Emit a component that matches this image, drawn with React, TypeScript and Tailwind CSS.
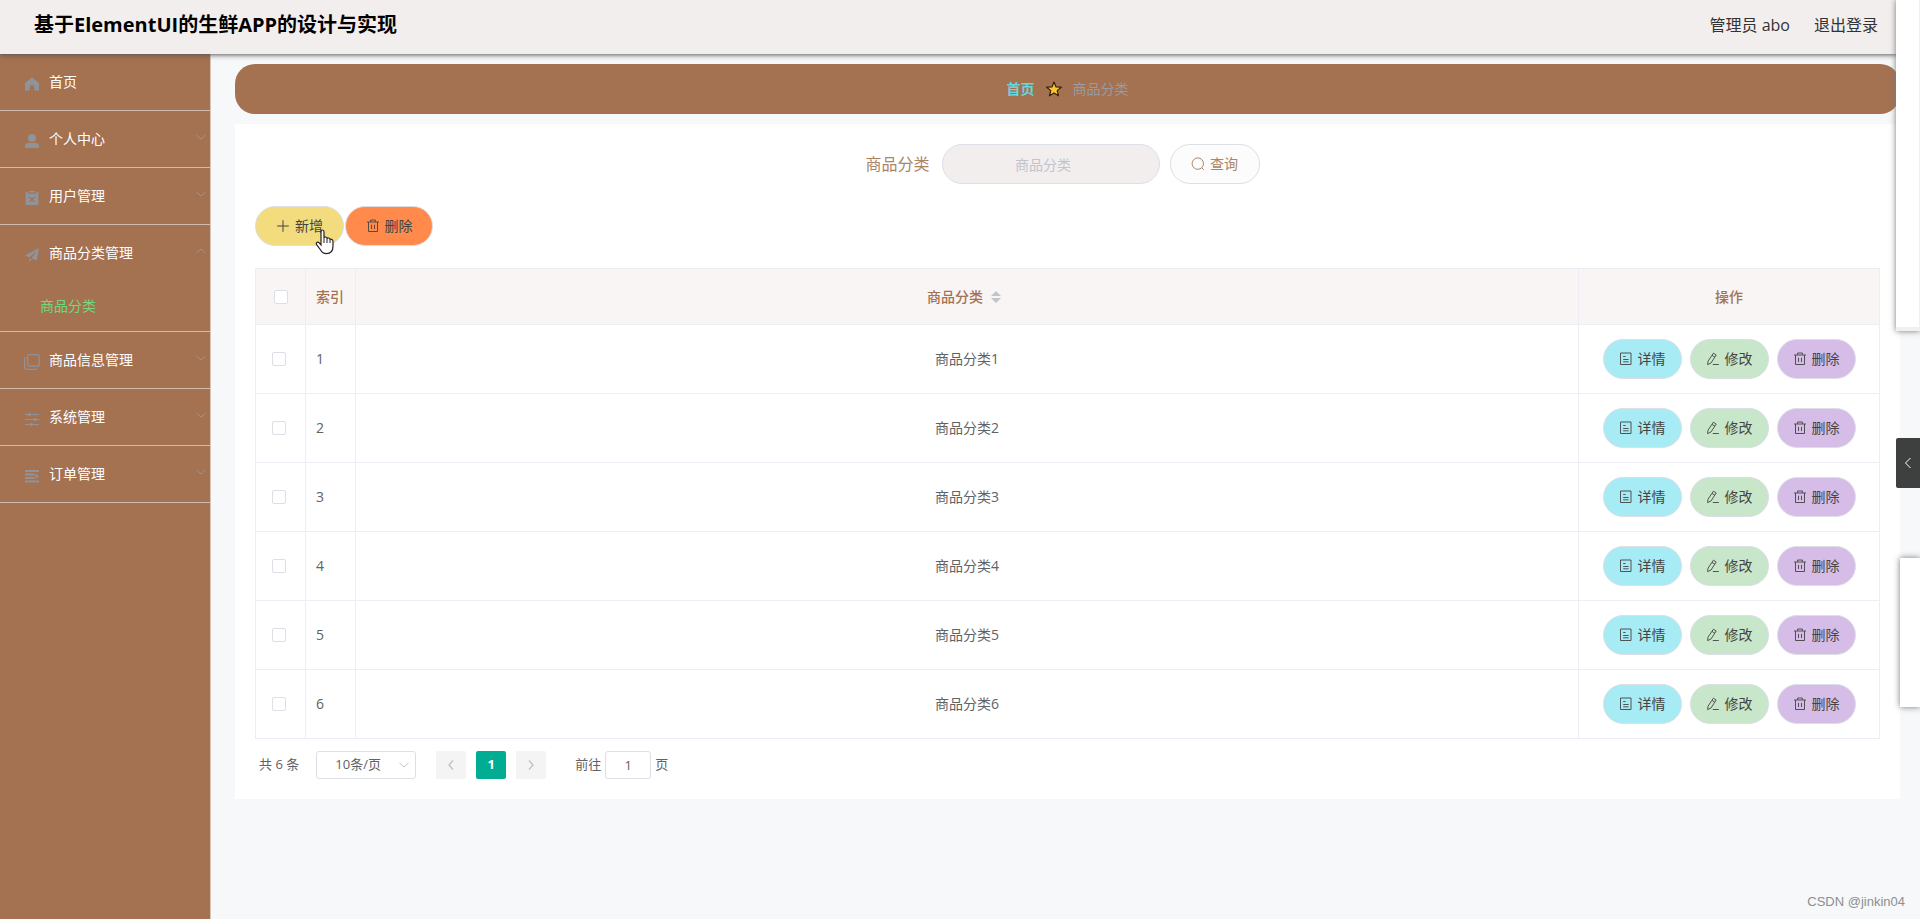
import { useState } from "react";
import type { ReactNode } from "react";

type IconProps = { className?: string };

const MENU = [
  { label: "首页", icon: HomeIcon, children: null },
  { label: "个人中心", icon: UserIcon, children: [] },
  { label: "用户管理", icon: ClipboardIcon, children: [] },
  { label: "商品分类管理", icon: PlaneIcon, children: ["商品分类"] },
  { label: "商品信息管理", icon: CopyIcon, children: [] },
  { label: "系统管理", icon: SlidersIcon, children: [] },
  { label: "订单管理", icon: ListIcon, children: [] },
];

const ROWS = [1, 2, 3, 4, 5, 6].map((id) => ({ id, name: `商品分类${id}` }));

function HomeIcon({ className }: IconProps) {
  return (
    <svg viewBox="0 0 14 14" className={className} fill="currentColor">
      <path d="M7 0.6 L13.4 5.6 Q14 6.1 14 6.9 V13.4 H9.2 V9.6 Q9.2 8.2 7 8.2 Q4.8 8.2 4.8 9.6 V13.4 H0 V6.9 Q0 6.1 0.6 5.6 Z" />
    </svg>
  );
}

function UserIcon({ className }: IconProps) {
  return (
    <svg viewBox="0 0 14 14" className={className} fill="currentColor">
      <circle cx="7" cy="4" r="4" />
      <path d="M0 14 V12 Q0 9 3.2 9 H10.8 Q14 9 14 12 V14 Z" />
    </svg>
  );
}

function ClipboardIcon({ className }: IconProps) {
  return (
    <svg viewBox="0 0 14 14" className={className}>
      <path
        fill="currentColor"
        d="M4 0 H10 V1.6 H4 Z M0.6 1.2 H3 V2.8 H11 V1.2 H13.4 V14 H0.6 Z"
      />
      <path d="M4.4 5.8 L9.6 11 M9.6 5.8 L4.4 11" stroke="#a47151" strokeWidth="1.1" />
    </svg>
  );
}

function PlaneIcon({ className }: IconProps) {
  return (
    <svg viewBox="0 0 14 14" className={className} fill="currentColor">
      <path d="M14 0 L11.8 12.4 L6.4 10.2 L12 2.6 L4.4 9.4 L0 7.4 Z M4.2 10.2 L6.8 11.4 L4.2 14 Z" />
    </svg>
  );
}

function CopyIcon({ className }: IconProps) {
  return (
    <svg viewBox="0 0 16 16" className={className} fill="none" stroke="currentColor" strokeWidth="1.2">
      <rect x="3.6" y="0.6" width="11.6" height="11.6" rx="2" />
      <path d="M1.8 3.2 Q0.6 3.6 0.6 5 V13 Q0.6 15.4 3 15.4 H10.6 Q12 15.4 12.6 14.2" />
    </svg>
  );
}

function SlidersIcon({ className }: IconProps) {
  return (
    <svg viewBox="0 0 14 14" className={className} fill="currentColor" stroke="currentColor">
      <path d="M0 2.5 H14 M0 7.5 H14 M0 12.5 H14" />
      <circle cx="4.4" cy="2.5" r="1.2" />
      <circle cx="10" cy="7.5" r="1.2" />
      <circle cx="6.2" cy="12.5" r="1.2" />
    </svg>
  );
}

function ListIcon({ className }: IconProps) {
  return (
    <svg viewBox="0 0 14 14" className={className} fill="currentColor">
      <path d="M0 1 H14 V3 H0 Z M0 4.5 H9.6 V6.4 H0 Z M0 8 H9.6 V9.9 H0 Z M0 11.4 H14 V13.4 H0 Z M10.4 4.4 L14 7.2 L10.4 10 Z" />
    </svg>
  );
}

function ArrowIcon({ className, d }: IconProps & { d: string }) {
  return (
    <svg viewBox="0 0 12 12" className={className} fill="none" stroke="currentColor">
      <path d={d} />
    </svg>
  );
}

function StarIcon({ className }: IconProps) {
  return (
    <svg viewBox="0 0 16 16" className={className}>
      <path
        d="M8 1 L10 5.9 L15.3 6.2 L11.2 9.6 L12.5 14.8 L8 11.9 L3.5 14.8 L4.8 9.6 L0.7 6.2 L6 5.9 Z"
        fill="#fdc52f"
        stroke="#35200f"
        strokeWidth="1.2"
        strokeLinejoin="round"
      />
    </svg>
  );
}

function SearchIcon({ className }: IconProps) {
  return (
    <svg viewBox="0 0 14 14" className={className} fill="none" stroke="currentColor">
      <circle cx="6.8" cy="6.6" r="5.7" />
      <path d="M10.8 10.8 L12.8 12.8" />
    </svg>
  );
}

function PlusIcon({ className }: IconProps) {
  return (
    <svg viewBox="0 0 14 14" className={className} stroke="currentColor">
      <path d="M7 1.2 V12.8 M1.2 7 H12.8" />
    </svg>
  );
}

function TrashIcon({ className }: IconProps) {
  return (
    <svg viewBox="0 0 14 14" className={className} fill="none" stroke="currentColor" strokeWidth="0.9">
      <path d="M1 3 H13 M4.6 2.8 V1 H9.4 V2.8 M2.5 3 V12.5 H11.5 V3 M5.5 5.8 V10 M8.5 5.8 V10" />
    </svg>
  );
}

function DocumentIcon({ className }: IconProps) {
  return (
    <svg viewBox="0 0 14 14" className={className} fill="none" stroke="currentColor" strokeWidth="0.9">
      <path d="M1.5 1 H12 V12.5 H1.5 Z M4.2 4.5 H6.6 M4.2 7.5 H9.6 M4.2 9.8 H9.6" />
    </svg>
  );
}

function EditIcon({ className }: IconProps) {
  return (
    <svg viewBox="0 0 14 14" className={className} fill="none" stroke="currentColor" strokeWidth="0.9">
      <path d="M7.4 1.2 L10.2 3 L5 11 L1.6 12.6 L2 9.2 Z M6 3.4 L8.8 5.2 M6.8 12.5 H12.8" />
    </svg>
  );
}

function HandCursor() {
  return (
    <svg viewBox="0 0 20 26" className="pointer-events-none absolute top-[23px] left-[60px] h-[26px] w-5">
      <path
        d="M6 3 Q6 1 7.5 1 Q9 1 9 3 V9 Q9.2 7.8 10.6 8 Q12 8.2 12 9.8 Q12.4 8.8 13.6 9 Q15 9.2 15 10.8 Q15.4 10 16.6 10.3 Q18 10.7 18 12.4 V17 Q18 24.6 11.4 24.6 Q7.6 24.6 5.6 21 L1.6 15.6 Q0.8 14.2 1.8 13.4 Q3 12.6 4.4 14.2 L6 16 Z"
        fill="#fff"
        stroke="#222"
        strokeWidth="1.2"
      />
      <path d="M9 9 V14 M12 10 V14 M15 11 V14" stroke="#222" />
    </svg>
  );
}

function PillButton({ className, children }: { className: string; children: ReactNode }) {
  return (
    <button
      type="button"
      className={`flex h-10 items-center justify-center gap-[5px] rounded-full border border-[#dcdfe6] text-sm ${className}`}
    >
      {children}
    </button>
  );
}

function Checkbox({ label }: { label: string }) {
  return (
    <input
      type="checkbox"
      aria-label={label}
      className="block h-[14px] w-[14px] appearance-none rounded-[2px] border border-[#dcdfe6] bg-white checked:bg-[#00ac92]"
    />
  );
}

function Sidebar() {
  return (
    <nav className="w-[211px] shrink-0 border-r border-[#d9c5b8] bg-[#a47151]">
      <ul>
        {MENU.map(({ label, icon: Icon, children }) => (
          <li key={label} className="border-b border-[#d0bbae]">
            <a href="#" className="flex h-14 items-center pr-[3px] pl-5 text-sm text-white">
              <span className="mr-[5px] flex w-6 justify-center pt-1">
                <Icon className={Icon === CopyIcon ? "h-4 w-4 text-[#909399]" : "h-[14px] w-[14px] text-[#909399]"} />
              </span>
              <span className="flex-1">{label}</span>
              {children && (
                <ArrowIcon
                  className="mb-1 h-3 w-3 text-[#a6948a]"
                  d={children.length > 0 ? "M1.5 8 L6 4 L10.5 8" : "M1.5 4 L6 8 L10.5 4"}
                />
              )}
            </a>
            {children?.map((child) => (
              <a key={child} href="#" className="flex h-[50px] items-center pl-10 text-sm text-[#75d67c]">
                {child}
              </a>
            ))}
          </li>
        ))}
      </ul>
    </nav>
  );
}

function CategoryTable() {
  return (
    <table className="w-full table-fixed border-separate border-spacing-0 border-t border-l border-[#ebeef5] text-sm text-[#606266]">
      <colgroup>
        <col className="w-[50px]" />
        <col className="w-[50px]" />
        <col />
        <col className="w-[301px]" />
      </colgroup>
      <thead>
        <tr className="h-14 bg-[#f9f5f4] text-[#a47151]">
          <th className="border-r border-b border-[#ebeef5] pl-[18px]">
            <Checkbox label="全选" />
          </th>
          <th className="border-r border-b border-[#ebeef5] pl-[10px] text-left font-medium">索引</th>
          <th className="border-r border-b border-[#ebeef5] pr-[6px] font-medium">
            <span className="flex items-center justify-center gap-2">
              商品分类
              <svg viewBox="0 0 10 14" className="h-[14px] w-[10px]" fill="#c0c4cc">
                <path d="M5 1 L10 6 H0 Z M0 8 H10 L5 13 Z" />
              </svg>
            </span>
          </th>
          <th className="border-r border-b border-[#ebeef5] font-medium">操作</th>
        </tr>
      </thead>
      <tbody>
        {ROWS.map((row) => (
          <tr key={row.id} className="h-[69px]">
            <td className="border-r border-b border-[#ebeef5] pl-4">
              <Checkbox label={row.name} />
            </td>
            <td className="border-r border-b border-[#ebeef5] pl-[10px]">{row.id}</td>
            <td className="border-r border-b border-[#ebeef5] text-center">{row.name}</td>
            <td className="border-r border-b border-[#ebeef5]">
              <div className="flex justify-center gap-2 text-[#444]">
                <PillButton className="w-[79px] bg-[#a7ecf4]">
                  <DocumentIcon className="h-[14px] w-[14px]" />
                  详情
                </PillButton>
                <PillButton className="w-[79px] bg-[#c8e6c9]">
                  <EditIcon className="h-[14px] w-[14px]" />
                  修改
                </PillButton>
                <PillButton className="w-[79px] bg-[#d5bde8]">
                  <TrashIcon className="h-[14px] w-[14px]" />
                  删除
                </PillButton>
              </div>
            </td>
          </tr>
        ))}
      </tbody>
    </table>
  );
}

function Pagination() {
  const [page, setPage] = useState("1");

  return (
    <div className="mt-3 flex h-7 items-center pl-1 text-[13px] text-[#606266]">
      <span className="mr-[17px]">共 6 条</span>
      <div className="relative mr-5">
        <select
          aria-label="每页条数"
          className="h-7 w-[100px] appearance-none rounded-[3px] border border-[#dcdfe6] bg-white pr-4 text-center"
        >
          <option>10条/页</option>
        </select>
        <ArrowIcon
          className="pointer-events-none absolute top-2 right-[6px] h-3 w-3 text-[#c0c4cc]"
          d="M1.5 4 L6 8 L10.5 4"
        />
      </div>
      <div className="flex gap-[10px]">
        <button
          aria-label="上一页"
          className="flex h-7 w-[30px] items-center justify-center rounded-[2px] bg-[#f4f4f5] text-[#c0c4cc]"
        >
          <ArrowIcon className="h-3 w-3 stroke-[1.5]" d="M8 1.5 L4 6 L8 10.5" />
        </button>
        <button className="h-7 w-[30px] rounded-[2px] bg-[#00ac92] font-bold text-white">1</button>
        <button
          aria-label="下一页"
          className="flex h-7 w-[30px] items-center justify-center rounded-[2px] bg-[#f4f4f5] text-[#c0c4cc]"
        >
          <ArrowIcon className="h-3 w-3 stroke-[1.5]" d="M4 1.5 L8 6 L4 10.5" />
        </button>
      </div>
      <label className="ml-[29px] flex items-center gap-1">
        前往
        <input
          value={page}
          onChange={(e) => setPage(e.target.value)}
          className="h-7 w-[46px] rounded-[3px] border border-[#dcdfe6] bg-white text-center"
        />
        页
      </label>
    </div>
  );
}

export default function App() {
  return (
    <div className="relative flex min-h-screen flex-col overflow-hidden bg-[#f6f8fa] font-['Open_Sans','Noto_Sans_CJK_SC',sans-serif]">
      <header className="relative z-10 flex h-[54px] items-center justify-between bg-[#f3eeee] pr-[42px] pb-1 pl-[34px] shadow-[0_1px_5px_0_#555]">
        <h1 className="text-xl font-bold text-black">基于ElementUI的生鲜APP的设计与实现</h1>
        <div className="flex gap-6 text-base text-[#333]">
          <span>管理员 abo</span>
          <a href="#">退出登录</a>
        </div>
      </header>

      <div className="flex flex-1">
        <Sidebar />

        <main className="min-w-0 flex-1 pt-[10px] pr-5 pl-6">
          <div className="mb-[10px] flex h-[50px] items-center justify-center rounded-[20px] bg-[#a47151] text-sm">
            <a href="#" className="font-bold text-[#68d5de]">
              首页
            </a>
            <StarIcon className="mx-[11px] h-4 w-4" />
            <span className="text-[#999ba3]">商品分类</span>
          </div>

          <section className="bg-white p-5">
            <form className="mb-[22px] flex items-center justify-center pr-[10px]">
              <label htmlFor="category" className="mr-3 text-base text-[#a98467]">
                商品分类
              </label>
              <input
                id="category"
                placeholder="商品分类"
                className="mr-[10px] h-10 w-[218px] rounded-full border border-[#dcdfe6] bg-[#f3eeee] pr-[30px] pl-[15px] text-center text-sm placeholder:text-[#c0c4cc]"
              />
              <PillButton className="w-[90px] bg-[#fcfcfc] text-[#a98467]">
                <SearchIcon className="h-[14px] w-[14px]" />
                查询
              </PillButton>
            </form>

            <div className="relative mb-[22px] flex gap-px text-[#444]">
              <PillButton className="w-[89px] bg-[#f2dc7e]">
                <PlusIcon className="h-[14px] w-[14px]" />
                新增
              </PillButton>
              <PillButton className="w-[88px] bg-[#ff8a4c]">
                <TrashIcon className="h-[14px] w-[14px]" />
                删除
              </PillButton>
              <HandCursor />
            </div>

            <CategoryTable />
            <Pagination />
          </section>
        </main>
      </div>

      {/* docked panels peeking in from the right edge */}
      <div className="absolute top-0 right-0 z-20 h-[331px] w-6 border-r border-b-4 border-[#f0f0f0] bg-white shadow-[0_0_6px_#777]" />
      <button
        aria-label="展开"
        className="absolute top-[438px] right-0 z-20 flex h-[50px] w-6 items-center justify-center rounded-l-[2px] bg-[#3e403f] text-white"
      >
        <ArrowIcon className="h-3 w-3" d="M8.5 1 L3.5 6 L8.5 11" />
      </button>
      <div className="absolute top-[558px] right-0 z-20 h-[149px] w-5 bg-white shadow-[0_0_6px_#777]" />
      <span className="absolute right-[15px] bottom-2 z-20 font-['Liberation_Sans',sans-serif] text-[13px] text-[#8d8f92]">
        CSDN @jinkin04
      </span>
    </div>
  );
}
